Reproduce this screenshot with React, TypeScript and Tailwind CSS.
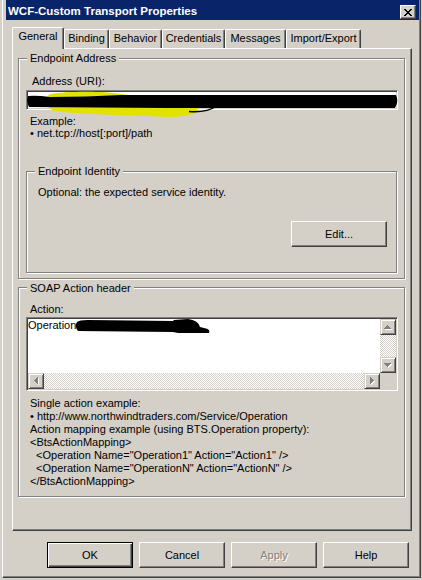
import React from "react";

type Dir = "up" | "down" | "left" | "right";

function arrowRects(dir: Dir): [number, number, number, number][] {
  const rows: [number, number][] = [
    [3, 1],
    [2, 3],
    [1, 5],
    [0, 7],
  ];
  if (dir === "up") return rows.map(([x, w], i) => [x, i, w, 1]);
  if (dir === "down") return rows.map(([x, w], i) => [x, 3 - i, w, 1]);
  if (dir === "left") return rows.map(([y, h], i) => [i, y, 1, h]);
  return rows.map(([y, h], i) => [3 - i, y, 1, h]);
}

function Arrow({ dir }: { dir: Dir }) {
  const vertical = dir === "up" || dir === "down";
  const w = vertical ? 8 : 5;
  const h = vertical ? 5 : 8;
  const rects = arrowRects(dir);
  return (
    <svg width={w} height={h} viewBox={`0 0 ${w} ${h}`} shapeRendering="crispEdges">
      {rects.map(([x, y, rw, rh], i) => (
        <rect key={"s" + i} x={x + 1} y={y + 1} width={rw} height={rh} fill="#ffffff" />
      ))}
      {rects.map(([x, y, rw, rh], i) => (
        <rect key={"g" + i} x={x} y={y} width={rw} height={rh} fill="#808080" />
      ))}
    </svg>
  );
}

function ScrollBtn({ dir }: { dir: Dir }) {
  return (
    <div className="w-[16px] h-[16px] shrink-0 bg-[#d4d0c8] border border-t-[#d4d0c8] border-l-[#d4d0c8] border-r-[#404040] border-b-[#404040] shadow-[inset_1px_1px_#ffffff,inset_-1px_-1px_#808080] flex items-center justify-center">
      <Arrow dir={dir} />
    </div>
  );
}

function XGlyph() {
  const r: [number, number, number][] = [
    [0, 0, 2], [6, 0, 2],
    [1, 1, 2], [5, 1, 2],
    [2, 2, 4],
    [3, 3, 2],
    [2, 4, 4],
    [1, 5, 2], [5, 5, 2],
    [0, 6, 2], [6, 6, 2],
  ];
  return (
    <svg width="8" height="7" viewBox="0 0 8 7" shapeRendering="crispEdges">
      {r.map(([x, y, w], i) => (
        <rect key={i} x={x} y={y} width={w} height={1} fill="#000000" />
      ))}
    </svg>
  );
}

export default function App() {
  return (
    <div className="w-[422px] h-[580px] bg-[#d4d0c8] overflow-hidden font-['Liberation_Sans',Arial,sans-serif] text-[11px] leading-[13px] text-black">
      <div className="ml-[2px] w-[419px] h-[578px] border-l border-l-white border-r border-r-[#404040] border-b border-b-[#404040] shadow-[inset_-1px_-1px_#808080] pl-[3px] pr-[1px] flex flex-col">
        {/* Title bar */}
        <div className="h-[20px] shrink-0 bg-[#0a246a] flex items-center justify-between pl-[2px] pr-[3px]">
          <span className="text-white font-bold text-[11.5px] leading-[20px] pt-[1px]">
            WCF-Custom Transport Properties
          </span>
          <div className="self-end mb-[1px] w-[16px] h-[14px] bg-[#d4d0c8] border border-t-white border-l-white border-r-[#404040] border-b-[#404040] shadow-[inset_-1px_-1px_#808080] flex items-center justify-center">
            <XGlyph />
          </div>
        </div>

        {/* Tabs */}
        <div className="mt-[7px] ml-[6px] h-[21px] shrink-0 flex items-end">
          <div className="relative z-10 w-[52px] h-[22px] mb-[-1px] bg-[#d4d0c8] border-t border-l border-r border-t-white border-l-white border-r-[#404040] shadow-[inset_-1px_0_#808080] rounded-tl-[2px] rounded-tr-[2px] text-center pt-[2px]">
            General
          </div>
          <div className="w-[45px] h-[19px] bg-[#d4d0c8] border-t border-l border-r border-t-white border-l-white border-r-[#404040] shadow-[inset_-1px_0_#808080] rounded-tl-[2px] rounded-tr-[2px] text-center pt-[2px]">
            Binding
          </div>
          <div className="w-[53px] h-[19px] bg-[#d4d0c8] border-t border-l border-r border-t-white border-l-white border-r-[#404040] shadow-[inset_-1px_0_#808080] rounded-tl-[2px] rounded-tr-[2px] text-center pt-[2px]">
            Behavior
          </div>
          <div className="w-[63px] h-[19px] bg-[#d4d0c8] border-t border-l border-r border-t-white border-l-white border-r-[#404040] shadow-[inset_-1px_0_#808080] rounded-tl-[2px] rounded-tr-[2px] text-center pt-[2px]">
            Credentials
          </div>
          <div className="w-[61px] h-[19px] bg-[#d4d0c8] border-t border-l border-r border-t-white border-l-white border-r-[#404040] shadow-[inset_-1px_0_#808080] rounded-tl-[2px] rounded-tr-[2px] text-center pt-[2px]">
            Messages
          </div>
          <div className="w-[75px] h-[19px] bg-[#d4d0c8] border-t border-l border-r border-t-white border-l-white border-r-[#404040] shadow-[inset_-1px_0_#808080] rounded-tl-[2px] rounded-tr-[2px] text-center pt-[2px]">
            Import/Export
          </div>
        </div>

        {/* Panel */}
        <div className="ml-[6px] w-[400px] h-[483px] shrink-0 border border-t-white border-l-white border-r-[#404040] border-b-[#404040] shadow-[inset_-1px_-1px_#808080] flex flex-col">
          {/* Endpoint Address */}
          <div className="relative mt-[9px] ml-[5px] w-[387px] h-[221px] shrink-0 border border-[#808080] shadow-[1px_1px_0_#ffffff,inset_1px_1px_0_#ffffff] flex flex-col">
            <span className="absolute left-[8px] top-[-7px] px-[3px] bg-[#d4d0c8]">Endpoint Address</span>
            <div className="mt-[16px] ml-[13px]">Address (URI):</div>
            <div className="relative mt-[2px] ml-[7px] w-[372px] h-[20px] shrink-0 bg-white border border-t-[#808080] border-l-[#808080] border-r-white border-b-white shadow-[inset_1px_1px_#404040,inset_-1px_-1px_#d4d0c8]">
              <svg
                className="absolute left-[-1px] top-[-1px] overflow-visible pointer-events-none"
                width="372"
                height="30"
                viewBox="0 0 372 30"
              >
                <path
                  d="M24,4 C40,1 80,1 95,4 C130,8 165,12 172,19 C168,27 150,28 120,26 C90,25 50,24 28,21 C20,18 18,8 24,4 Z"
                  fill="#e2e200"
                />
                <path
                  d="M2,6 Q0,11 3,17 L140,18 L369,18 Q373,12 370,5 L95,5 Q60,7 24,7 Q10,5 2,6 Z"
                  fill="#000000"
                />
                <path d="M163,21.5 Q180,23 191,16" stroke="#000000" strokeWidth="1.4" fill="none" />
              </svg>
            </div>
            <div className="mt-[5px] ml-[11px] leading-[12px]">
              <div>Example:</div>
              <div>• net.tcp://host[:port]/path</div>
            </div>

            {/* Endpoint Identity */}
            <div className="relative mt-[32px] ml-[7px] w-[371px] h-[102px] shrink-0 border border-[#808080] shadow-[1px_1px_0_#ffffff,inset_1px_1px_0_#ffffff] flex flex-col">
              <span className="absolute left-[8px] top-[-7px] px-[3px] bg-[#d4d0c8]">Endpoint Identity</span>
              <div className="mt-[14px] ml-[11px]">Optional: the expected service identity.</div>
              <div className="mt-[22px] flex justify-end pr-[9px]">
                <div className="w-[96px] h-[26px] bg-[#d4d0c8] border border-t-white border-l-white border-r-[#404040] border-b-[#404040] shadow-[inset_-1px_-1px_#808080] flex items-center justify-center">
                  Edit...
                </div>
              </div>
            </div>
          </div>

          {/* SOAP Action header */}
          <div className="relative mt-[8px] ml-[5px] w-[387px] h-[210px] shrink-0 border border-[#808080] shadow-[1px_1px_0_#ffffff,inset_1px_1px_0_#ffffff] flex flex-col">
            <span className="absolute left-[8px] top-[-6px] px-[3px] bg-[#d4d0c8]">SOAP Action header</span>
            <div className="mt-[15px] ml-[11px]">Action:</div>
            <div className="mt-[1px] ml-[7px] w-[372px] h-[74px] shrink-0 bg-white border border-t-[#808080] border-l-[#808080] border-r-white border-b-white shadow-[inset_1px_1px_#404040,inset_-1px_-1px_#d4d0c8] p-[1px]">
              <div className="w-full h-full grid grid-cols-[1fr_16px] grid-rows-[1fr_16px]">
                <div className="relative bg-white">
                  <span>Operation</span>
                  <svg
                    className="absolute left-0 top-0 overflow-visible pointer-events-none"
                    width="200"
                    height="16"
                    viewBox="0 0 200 16"
                  >
                    <path
                      d="M49,3 Q46,7 50,12 L145,13 L150,14 L170,14 L181,14 Q183,10 176,9 L172,8 Q170,1 160,0 L146,1 L145,2 L60,1 Q51,1 49,3 Z"
                      fill="#000000"
                    />
                  </svg>
                </div>
                <div className="flex flex-col">
                  <ScrollBtn dir="up" />
                  <div className="flex-1 bg-[repeating-conic-gradient(#d4d0c8_0%_25%,#ffffff_0%_50%)] bg-[length:2px_2px]" />
                  <ScrollBtn dir="down" />
                </div>
                <div className="flex">
                  <ScrollBtn dir="left" />
                  <div className="flex-1 bg-[repeating-conic-gradient(#d4d0c8_0%_25%,#ffffff_0%_50%)] bg-[length:2px_2px]" />
                  <ScrollBtn dir="right" />
                </div>
                <div className="bg-[#d4d0c8]" />
              </div>
            </div>
            <div className="mt-[6px] ml-[11px] whitespace-pre">
              <div>Single action example:</div>
              <div>• http://www.northwindtraders.com/Service/Operation</div>
              <div>Action mapping example (using BTS.Operation property):</div>
              <div>{"<BtsActionMapping>"}</div>
              <div>{'  <Operation Name="Operation1" Action="Action1" />'}</div>
              <div>{'  <Operation Name="OperationN" Action="ActionN" />'}</div>
              <div>{"</BtsActionMapping>"}</div>
            </div>
          </div>
        </div>

        {/* Buttons */}
        <div className="mt-[11px] ml-[41px] flex gap-[6px]">
          <div className="w-[86px] h-[26px] bg-[#d4d0c8] border border-black shadow-[inset_1px_1px_#ffffff,inset_-1px_-1px_#404040,inset_-2px_-2px_#808080] flex items-center justify-center">
            OK
          </div>
          <div className="w-[86px] h-[26px] bg-[#d4d0c8] border border-t-white border-l-white border-r-[#404040] border-b-[#404040] shadow-[inset_-1px_-1px_#808080] flex items-center justify-center">
            Cancel
          </div>
          <div className="w-[86px] h-[26px] bg-[#d4d0c8] border border-t-white border-l-white border-r-[#404040] border-b-[#404040] shadow-[inset_-1px_-1px_#808080] flex items-center justify-center text-[#808080] [text-shadow:1px_1px_0_#ffffff]">
            Apply
          </div>
          <div className="w-[86px] h-[26px] bg-[#d4d0c8] border border-t-white border-l-white border-r-[#404040] border-b-[#404040] shadow-[inset_-1px_-1px_#808080] flex items-center justify-center">
            Help
          </div>
        </div>
      </div>
    </div>
  );
}
